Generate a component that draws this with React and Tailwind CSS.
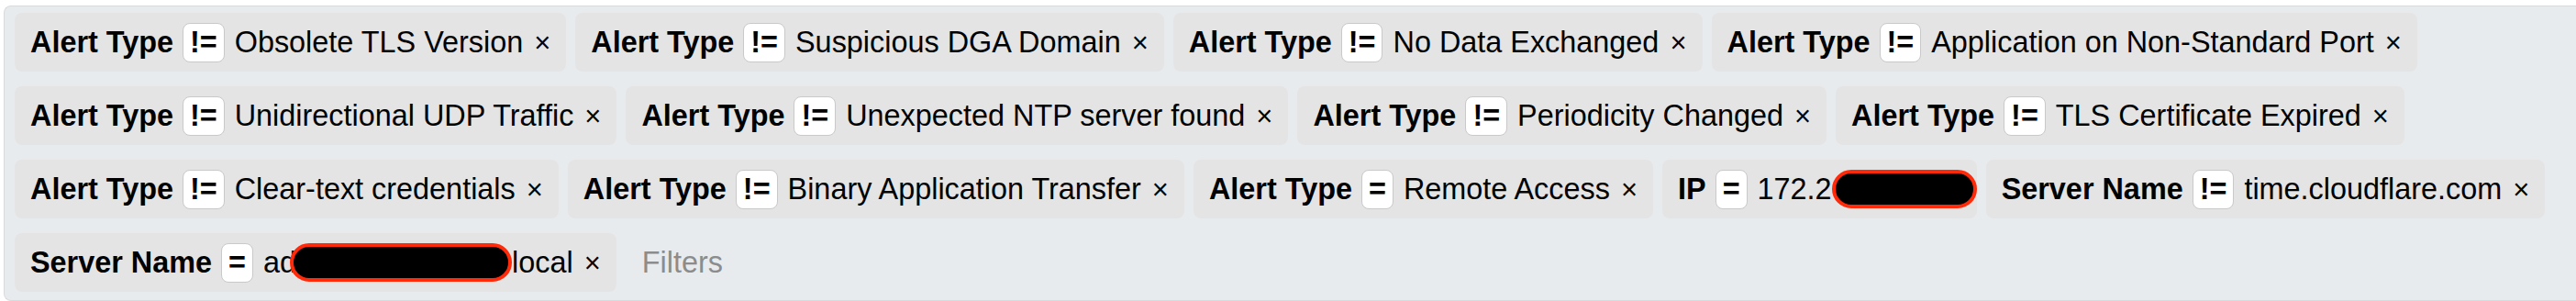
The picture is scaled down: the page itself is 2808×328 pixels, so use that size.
import React from 'react';

const filters = [
    { key: 'Alert Type', op: '!=', value: 'Obsolete TLS Version' },
    { key: 'Alert Type', op: '!=', value: 'Suspicious DGA Domain' },
    { key: 'Alert Type', op: '!=', value: 'No Data Exchanged' },
    { key: 'Alert Type', op: '!=', value: 'Application on Non-Standard Port' },
    { key: 'Alert Type', op: '!=', value: 'Unidirectional UDP Traffic' },
    { key: 'Alert Type', op: '!=', value: 'Unexpected NTP server found' },
    { key: 'Alert Type', op: '!=', value: 'Periodicity Changed' },
    { key: 'Alert Type', op: '!=', value: 'TLS Certificate Expired' },
    { key: 'Alert Type', op: '!=', value: 'Clear-text credentials' },
    { key: 'Alert Type', op: '!=', value: 'Binary Application Transfer' },
    { key: 'Alert Type', op: '=', value: 'Remote Access' },
    { key: 'IP', op: '=', value: '172.2', redact: 'end' },
    { key: 'Server Name', op: '!=', value: 'time.cloudflare.com' },
    { key: 'Server Name', op: '=', value: 'ad', after: 'local', redact: 'middle' },
];

function Redacted({ className }) {
    return <span className={`inline-block h-[42px] rounded-full bg-black border-[4px] border-[#ff2a0a] ${className}`} />;
}

function Chip({ f }) {
    const isEnd = f.redact === 'end';
    return (
        <div className={`flex items-center h-[64px] rounded-[8px] bg-[#e4e4e4] pl-[17px] ${isEnd ? 'pr-0' : 'pr-[17px]'}`}>
            <span className="font-bold">{f.key}</span>
            <span className="ml-[10px] h-[43px] px-[7px] flex items-center rounded-[8px] bg-white border border-[#c9c9c9] font-bold">
                {f.op}
            </span>
            <span className="ml-[11px] flex items-center">
                {f.value}
                {isEnd && <Redacted className="w-[158px]" />}
                {f.redact === 'middle' && (
                    <>
                        <Redacted className="w-[242px] -ml-[7px]" />
                        {f.after}
                    </>
                )}
            </span>
            {!isEnd && <span className="ml-[12px] text-[31px] leading-none">×</span>}
        </div>
    );
}

export default function App() {
    return (
        <div className="w-[2808px] h-[328px] bg-white pt-[6px] pl-[4px] overflow-hidden">
            <div
                className="h-[322px] border border-r-0 border-[#d9dadb] rounded-l-[8px] bg-[#e8ebee] pl-[11px] pt-[7px] pb-[8px] flex flex-wrap content-start gap-x-[10px] gap-y-[16px] text-[32.4px] text-black"
                style={{ fontFamily: '"Liberation Sans", Arial, sans-serif' }}
            >
                {filters.map((f, i) => (
                    <Chip key={i} f={f} />
                ))}
                <input
                    className="h-[64px] w-[300px] bg-transparent outline-none pl-[18px] placeholder:text-[#8c8c8c]"
                    placeholder="Filters"
                />
            </div>
        </div>
    );
}
